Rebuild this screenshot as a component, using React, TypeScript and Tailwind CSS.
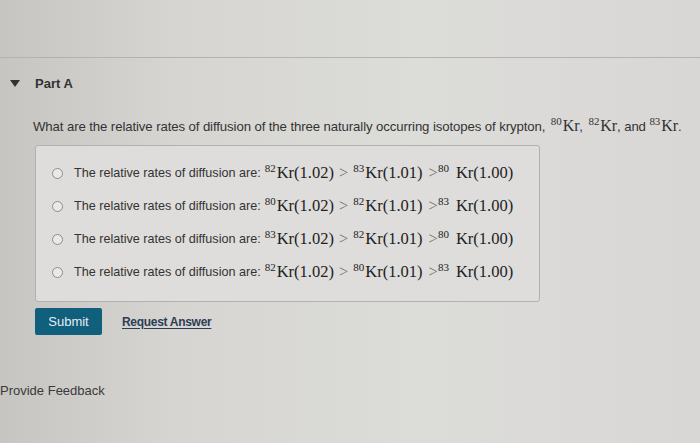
import React from 'react';

const Sup = ({ n, size = 'text-[11px]' }: { n: string; size?: string }) => (
  <sup
    className={`${size} leading-[0] relative -top-[6px] align-baseline mr-[1px] font-['Liberation_Serif',serif]`}
  >
    {n}
  </sup>
);

const Kr = ({ mass, value }: { mass: string; value: string }) => (
  <span>
    <Sup n={mass} />
    Kr({value})
  </span>
);

const options = [
  ['82', '83', '80'],
  ['80', '82', '83'],
  ['83', '82', '80'],
  ['82', '80', '83'],
];

export default function App() {
  return (
    <div
      className="w-[700px] h-[443px] overflow-hidden text-[#2b2b2b] bg-[linear-gradient(90deg,#c7c5c1_0%,#d6d5d2_25%,#dcdcd9_60%,#d9d7d6_100%)]"
      style={{ fontFamily: '"Liberation Sans", Arial, sans-serif' }}
    >
      <div className="h-[58px] border-b border-[#b3b2ae]" />

      <div className="flex items-center h-[50px] pl-[10px] pt-[1px]">
        <svg width="10" height="7" viewBox="0 0 10 7" className="mr-[15px]">
          <path d="M0 0 H10 L5 7 Z" fill="#333" />
        </svg>
        <span className="text-[13px] font-bold text-[#333]">Part A</span>
      </div>

      <div className="pl-[33px] pt-[8px] h-[28px] leading-[20px] text-[13.2px] text-[#333] tracking-[-0.1px] whitespace-nowrap">
        What are the relative rates of diffusion of the three naturally occurring isotopes of krypton,{' '}
        <span className="font-['Liberation_Serif',serif] text-[16px] ml-[2px]">
          <Sup n="80" />Kr
        </span>
        ,{' '}
        <span className="font-['Liberation_Serif',serif] text-[16px] ml-[2px]">
          <Sup n="82" />Kr
        </span>
        , and{' '}
        <span className="font-['Liberation_Serif',serif] text-[16px]">
          <Sup n="83" />Kr
        </span>
        .
      </div>

      <div className="ml-[35px] mt-[9px] w-[505px] h-[157px] border border-[#b2b1ad] rounded-[3px] bg-[#dedddb] pt-[11px] pl-[16px]">
        {options.map((o, i) => (
          <div key={i} className="flex items-center h-[33px]">
            <span className="w-[11px] h-[11px] rounded-full border border-[#8d8d8b] bg-[#e9e9e7] mr-[11px]" />
            <span className="text-[12.6px] text-[#333]">The relative rates of diffusion are:</span>
            <span className="ml-[4px] font-['Liberation_Serif',serif] text-[16.5px] text-[#222] whitespace-nowrap">
              <Kr mass={o[0]} value="1.02" />
              <span className="text-[#777] mx-[5px]">&gt;</span>
              <Kr mass={o[1]} value="1.01" />
              <span className="text-[#777] ml-[6px]">&gt;</span>
              <Sup n={o[2]} />
              <span className="ml-[6px]">Kr(1.00)</span>
            </span>
          </div>
        ))}
      </div>

      <div className="flex items-center pl-[35px] mt-[6px] h-[27px]">
        <button className="w-[67px] h-[27px] bg-[#0f5f7d] text-[#e8eef0] text-[13px] rounded-[2px]">
          Submit
        </button>
        <span className="ml-[20px] text-[12px] font-bold text-[#2c3d55] underline underline-offset-2 tracking-[-0.3px]">
          Request Answer
        </span>
      </div>

      <div className="mt-[46px] text-[13px] text-[#3a3a3a]">Provide Feedback</div>
    </div>
  );
}
